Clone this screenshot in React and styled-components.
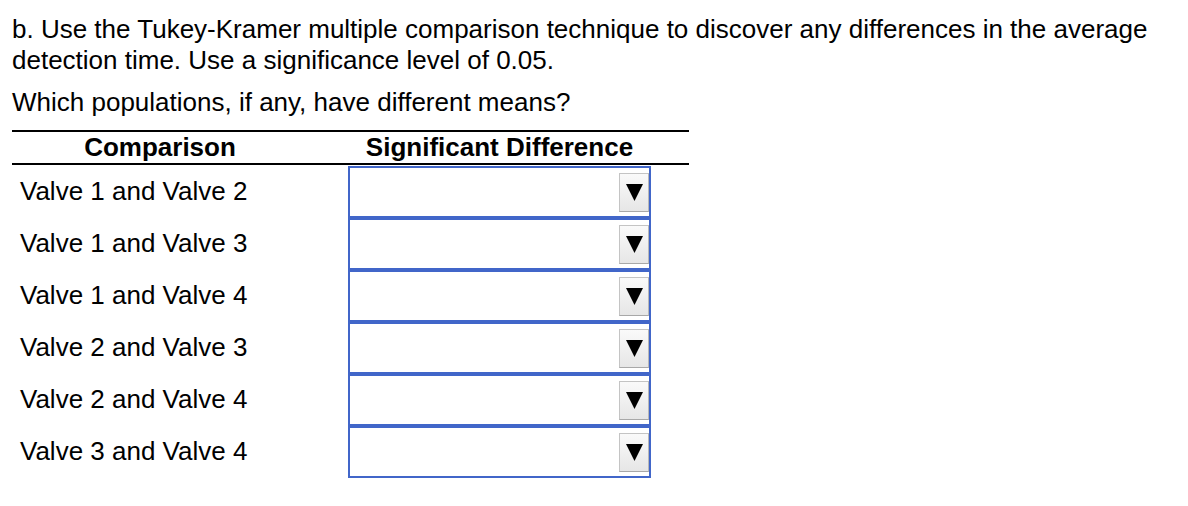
import React from 'react';
import styled, { createGlobalStyle } from 'styled-components';

const comparisons = [
  'Valve 1 and Valve 2',
  'Valve 1 and Valve 3',
  'Valve 1 and Valve 4',
  'Valve 2 and Valve 3',
  'Valve 2 and Valve 4',
  'Valve 3 and Valve 4',
];

const GlobalStyle = createGlobalStyle`
  body {
    margin: 0;
    background: #fff;
    color: #000;
    font-family: "Liberation Sans", Arial, sans-serif;
  }
`;

const Page = styled.div`
  padding: 14px 12px;
  font-size: 26px;
`;

const Para = styled.p`
  margin: 0 0 11px;
  line-height: 31px;
  white-space: nowrap;
`;

const Table = styled.div`
  width: 677px;
  margin-top: 12px;
  display: grid;
  grid-template-columns: 336px 303px 1fr;
`;

const Header = styled.div`
  grid-column: 1 / -1;
  display: grid;
  grid-template-columns: subgrid;
  border-top: 2px solid #000;
  border-bottom: 2px solid #000;
  height: 31px;
  align-items: center;
  font-weight: bold;
  margin-bottom: 1px;
`;

const HeadCell = styled.div`
  text-align: center;
  padding-right: ${p => p.$pad || 0}px;
  white-space: nowrap;
`;

const Label = styled.div`
  height: 52px;
  display: flex;
  align-items: center;
  padding-left: 8px;
  padding-bottom: 2px;
  box-sizing: border-box;
  white-space: nowrap;
`;

const SelectBox = styled.div`
  box-sizing: border-box;
  height: 52px;
  border: 2px solid #4166c9;
  display: flex;
  align-items: center;
  justify-content: flex-end;
`;

const Arrow = styled.div`
  box-sizing: border-box;
  width: 30px;
  height: 39px;
  display: flex;
  align-items: center;
  justify-content: center;
  background: linear-gradient(#fafafa, #e6e6e6);
  border: 1px solid #c4c4c4;
  border-bottom-color: #a8a8a8;
  border-right-color: #b8b8b8;
`;

const Spacer = styled.div``;

const TriangleDown = () => (
  <svg width="17" height="17" viewBox="0 0 17 17">
    <polygon points="0,0 17,0 8.5,17" fill="#000" />
  </svg>
);

export default function App() {
  return (
    <>
      <GlobalStyle />
      <Page>
        <Para>
          b. Use the Tukey-Kramer multiple comparison technique to discover any differences in the average
          <br />
          detection time. Use a significance level of 0.05.
        </Para>
        <Para>Which populations, if any, have different means?</Para>
        <Table>
          <Header>
            <HeadCell $pad={40}>Comparison</HeadCell>
            <HeadCell>Significant Difference</HeadCell>
            <Spacer />
          </Header>
          {comparisons.map(c => (
            <React.Fragment key={c}>
              <Label>{c}</Label>
              <SelectBox>
                <Arrow>
                  <TriangleDown />
                </Arrow>
              </SelectBox>
              <Spacer />
            </React.Fragment>
          ))}
        </Table>
      </Page>
    </>
  );
}
